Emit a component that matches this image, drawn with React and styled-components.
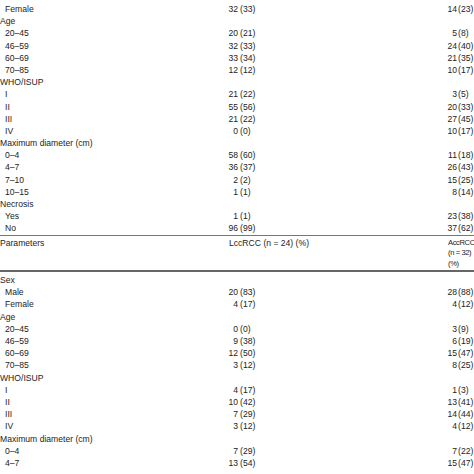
import React from "react";
import styled, { createGlobalStyle } from "styled-components";

const GlobalStyle = createGlobalStyle`
  html, body {
    margin: 0;
    padding: 0;
    background: #ffffff;
    overflow: hidden;
  }
  body {
    font-family: "Liberation Sans", Arial, sans-serif;
    color: #232323;
  }
`;

const top = [
  { label: "Female", a: ["32", "33"], b: ["14", "23"], sub: true },
  { label: "Age" },
  { label: "20–45", a: ["20", "21"], b: ["5", "8"], sub: true },
  { label: "46–59", a: ["32", "33"], b: ["24", "40"], sub: true },
  { label: "60–69", a: ["33", "34"], b: ["21", "35"], sub: true },
  { label: "70–85", a: ["12", "12"], b: ["10", "17"], sub: true },
  { label: "WHO/ISUP" },
  { label: "I", a: ["21", "22"], b: ["3", "5"], sub: true },
  { label: "II", a: ["55", "56"], b: ["20", "33"], sub: true },
  { label: "III", a: ["21", "22"], b: ["27", "45"], sub: true },
  { label: "IV", a: ["0", "0"], b: ["10", "17"], sub: true },
  { label: "Maximum diameter (cm)" },
  { label: "0–4", a: ["58", "60"], b: ["11", "18"], sub: true },
  { label: "4–7", a: ["36", "37"], b: ["26", "43"], sub: true },
  { label: "7–10", a: ["2", "2"], b: ["15", "25"], sub: true },
  { label: "10–15", a: ["1", "1"], b: ["8", "14"], sub: true },
  { label: "Necrosis" },
  { label: "Yes", a: ["1", "1"], b: ["23", "38"], sub: true },
  { label: "No", a: ["96", "99"], b: ["37", "62"], sub: true },
];

const bottom = [
  { label: "Sex" },
  { label: "Male", a: ["20", "83"], b: ["28", "88"], sub: true },
  { label: "Female", a: ["4", "17"], b: ["4", "12"], sub: true },
  { label: "Age" },
  { label: "20–45", a: ["0", "0"], b: ["3", "9"], sub: true },
  { label: "46–59", a: ["9", "38"], b: ["6", "19"], sub: true },
  { label: "60–69", a: ["12", "50"], b: ["15", "47"], sub: true },
  { label: "70–85", a: ["3", "12"], b: ["8", "25"], sub: true },
  { label: "WHO/ISUP" },
  { label: "I", a: ["4", "17"], b: ["1", "3"], sub: true },
  { label: "II", a: ["10", "42"], b: ["13", "41"], sub: true },
  { label: "III", a: ["7", "29"], b: ["14", "44"], sub: true },
  { label: "IV", a: ["3", "12"], b: ["4", "12"], sub: true },
  { label: "Maximum diameter (cm)" },
  { label: "0–4", a: ["7", "29"], b: ["7", "22"], sub: true },
  { label: "4–7", a: ["13", "54"], b: ["15", "47"], sub: true },
];

const Page = styled.div`
  width: 490px;
  font-size: 8.6px;
`;

const Section = styled.div`
  padding-top: ${(p) => p.$pt || 0}px;
`;

const Row = styled.div`
  display: grid;
  grid-template-columns: 227px 221px 40px;
  height: 12.2px;
  line-height: 12.2px;
  white-space: nowrap;
`;

const Label = styled.div`
  padding-left: ${(p) => (p.$sub ? 5 : 0)}px;
`;

const Value = styled.div`
  display: grid;
  grid-template-columns: ${(p) => p.$w}px auto;
  column-gap: ${(p) => p.$gap}px;
  justify-content: start;
`;

const Count = styled.span`
  justify-self: end;
`;

const Pct = styled.span``;

const ThinRule = styled.div`
  height: 1px;
  background: #777777;
`;

const ThickRule = styled.div`
  height: 2px;
  background: #666666;
`;

const HeadRow = styled.div`
  display: grid;
  grid-template-columns: 227px 221px 26px;
  height: 34px;
  padding-top: 2px;
  box-sizing: border-box;
  line-height: 10.5px;
`;

const HeadCell = styled.div`
  padding-left: ${(p) => p.$pl || 0}px;
  white-space: nowrap;
`;

const NarrowHead = styled.div`
  font-size: 7.6px;
  letter-spacing: -0.4px;
  line-height: 10.5px;
  white-space: nowrap;
`;

const Cell = ({ v, w, gap }) =>
  v ? (
    <Value $w={w} $gap={gap}>
      <Count>{v[0]}</Count>
      <Pct>({v[1]})</Pct>
    </Value>
  ) : (
    <div />
  );

const Rows = ({ data }) =>
  data.map((r, i) => (
    <Row key={i}>
      <Label $sub={r.sub}>{r.label}</Label>
      <Cell v={r.a} w={11} gap={2} />
      <Cell v={r.b} w={9} gap={1} />
    </Row>
  ));

export default function App() {
  return (
    <>
      <GlobalStyle />
      <Page>
        <Section $pt={3}>
          <Rows data={top} />
        </Section>
        <ThinRule />
        <HeadRow>
          <HeadCell>Parameters</HeadCell>
          <HeadCell $pl={2}>LccRCC (n = 24) (%)</HeadCell>
          <NarrowHead>
            AccRCC
            <br />
            (n = 32)
            <br />
            (%)
          </NarrowHead>
        </HeadRow>
        <ThickRule />
        <Section $pt={2.5}>
          <Rows data={bottom} />
        </Section>
      </Page>
    </>
  );
}
